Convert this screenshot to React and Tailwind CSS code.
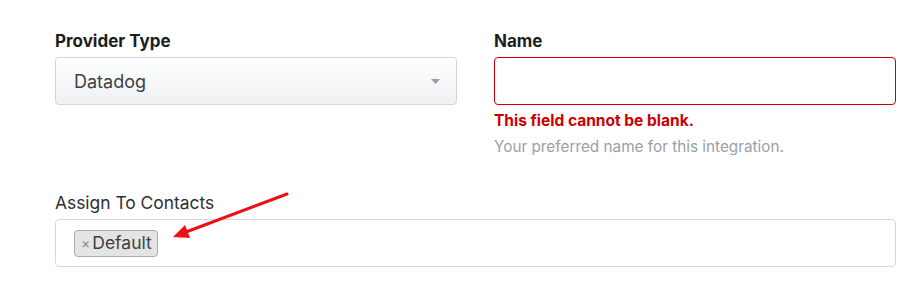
import React from 'react';

function Field({ label, bold = true, children }) {
  return (
    <div className="flex flex-col">
      <label className={`leading-6 mb-[4px] ${bold ? 'text-[17px] font-bold text-[#1b1e21]' : 'text-[17.4px] font-normal text-[#2d3035]'}`}>
        {label}
      </label>
      {children}
    </div>
  );
}

export default function App() {
  return (
    <div className="relative w-[909px] h-[299px] bg-white pl-[55px] pr-[13px] pt-[29px] font-['Inter','Liberation_Sans',sans-serif]">
      <div className="grid grid-cols-2 gap-x-[37px]">
        <Field label="Provider Type">
          <div className="h-[48px] rounded-[4px] border border-[#d3d6da] bg-gradient-to-b from-white to-[#eef0f2] flex items-center justify-between pl-[18px] pr-[15px]">
            <span className="text-[18px] text-[#3c4044]">Datadog</span>
            <svg width="9" height="5" viewBox="0 0 9 5" className="mr-[1px]">
              <path d="M0 0h9L4.5 5z" fill="#9a9ea3" />
            </svg>
          </div>
        </Field>
        <Field label="Name">
          <div className="h-[48px] rounded-[4px] border border-[#cc0000] bg-white" />
          <p className="mt-[6px] text-[15.5px] leading-[20px] font-bold text-[#cc0000]">This field cannot be blank.</p>
          <p className="mt-[6px] text-[15.3px] leading-[20px] text-[#9aa0a6]">Your preferred name for this integration.</p>
        </Field>
      </div>

      <div className="mt-[34px]">
        <Field label="Assign To Contacts" bold={false}>
          <div className="h-[48px] rounded-[4px] border border-[#d6d9dc] bg-white flex items-center pl-[18px]">
            <span className="flex items-center h-[27px] rounded-[4px] border border-[#aaaaaa] bg-[#e4e4e4] pl-[6px] pr-[5px]">
              <span className="text-[14px] text-[#8a8a8a] mr-[2px] leading-none">×</span>
              <span className="text-[17.5px] text-[#3c4044] leading-none">Default</span>
            </span>
          </div>
        </Field>
      </div>

      <svg className="absolute left-0 top-0 pointer-events-none" width="909" height="299">
        <line x1="287" y1="194" x2="186" y2="232" stroke="#ee1111" strokeWidth="3" strokeLinecap="round" />
        <path d="M173 237 L185 225 L190 238 Z" fill="#ee1111" />
      </svg>
    </div>
  );
}
